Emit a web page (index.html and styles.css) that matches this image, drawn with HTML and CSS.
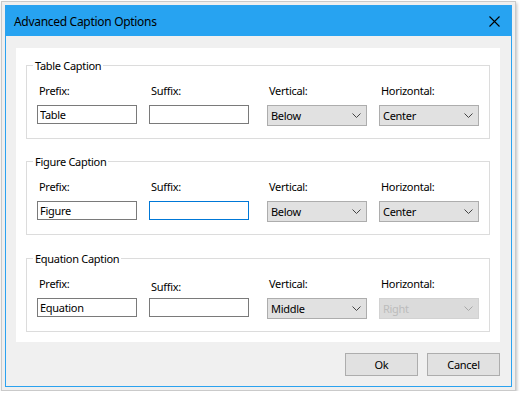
FILE: index.html
```html
<!DOCTYPE html>
<html lang="en">

<head>
    <meta charset="UTF-8">
    <meta name="viewport" content="width=device-width, initial-scale=1.0">
    <title>Advanced Caption Options</title>
    <link rel="stylesheet" href="styles.css">
</head>

<body>
    <div class="frame">
        <div class="window">
            <div class="titlebar">
                <span class="title">Advanced Caption Options</span>
                <svg class="close" width="11" height="11" viewBox="0 0 11 11">
                    <path d="M0.5 0.5 L10.5 10.5 M10.5 0.5 L0.5 10.5" stroke="#000" stroke-width="1.1" fill="none" />
                </svg>
            </div>
            <div class="body">
                <div class="panel">
                    <fieldset class="group">
                        <legend>Table Caption</legend>
                        <div class="row">
                            <div class="cell">
                                <label>Prefix:</label>
                                <input type="text" class="text" value="Table">
                            </div>
                            <div class="cell">
                                <label>Suffix:</label>
                                <input type="text" class="text" value="">
                            </div>
                            <div class="cell">
                                <label>Vertical:</label>
                                <span class="drop">
                                    <select>
                                        <option>Below</option>
                                    </select>
                                    <svg class="chev" width="9" height="5" viewBox="0 0 9 5"><path d="M0.5 0.5 L4.5 4.5 L8.5 0.5" /></svg>
                                </span>
                            </div>
                            <div class="cell">
                                <label>Horizontal:</label>
                                <span class="drop">
                                    <select>
                                        <option>Center</option>
                                    </select>
                                    <svg class="chev" width="9" height="5" viewBox="0 0 9 5"><path d="M0.5 0.5 L4.5 4.5 L8.5 0.5" /></svg>
                                </span>
                            </div>
                        </div>
                    </fieldset>

                    <fieldset class="group">
                        <legend>Figure Caption</legend>
                        <div class="row">
                            <div class="cell">
                                <label>Prefix:</label>
                                <input type="text" class="text" value="Figure">
                            </div>
                            <div class="cell">
                                <label>Suffix:</label>
                                <input type="text" class="text focus" value="">
                            </div>
                            <div class="cell">
                                <label>Vertical:</label>
                                <span class="drop">
                                    <select>
                                        <option>Below</option>
                                    </select>
                                    <svg class="chev" width="9" height="5" viewBox="0 0 9 5"><path d="M0.5 0.5 L4.5 4.5 L8.5 0.5" /></svg>
                                </span>
                            </div>
                            <div class="cell">
                                <label>Horizontal:</label>
                                <span class="drop">
                                    <select>
                                        <option>Center</option>
                                    </select>
                                    <svg class="chev" width="9" height="5" viewBox="0 0 9 5"><path d="M0.5 0.5 L4.5 4.5 L8.5 0.5" /></svg>
                                </span>
                            </div>
                        </div>
                    </fieldset>

                    <fieldset class="group last">
                        <legend>Equation Caption</legend>
                        <div class="row">
                            <div class="cell">
                                <label>Prefix:</label>
                                <input type="text" class="text" value="Equation">
                            </div>
                            <div class="cell">
                                <label class="low">Suffix:</label>
                                <input type="text" class="text" value="">
                            </div>
                            <div class="cell">
                                <label>Vertical:</label>
                                <span class="drop">
                                    <select>
                                        <option>Middle</option>
                                    </select>
                                    <svg class="chev" width="9" height="5" viewBox="0 0 9 5"><path d="M0.5 0.5 L4.5 4.5 L8.5 0.5" /></svg>
                                </span>
                            </div>
                            <div class="cell">
                                <label>Horizontal:</label>
                                <span class="drop off">
                                    <select disabled>
                                        <option>Right</option>
                                    </select>
                                    <svg class="chev" width="9" height="5" viewBox="0 0 9 5"><path d="M0.5 0.5 L4.5 4.5 L8.5 0.5" /></svg>
                                </span>
                            </div>
                        </div>
                    </fieldset>
                </div>
                <div class="buttons">
                    <button type="button" class="btn">Ok</button>
                    <button type="button" class="btn">Cancel</button>
                </div>
            </div>
        </div>
    </div>
</body>

</html>
```

FILE: styles.css
```css
* {
    margin: 0px;
    padding: 0px;
    box-sizing: border-box;
}

body {
    background: #ffffff;
    font-family: "Segoe UI", "Noto Sans", sans-serif;
    font-size: 11px;
    letter-spacing: -0.3px;
    color: #000000;
}

.frame {
    width: 515px;
    height: 390px;
    margin: 1px 0px 0px 1px;
    padding: 3px;
    border: 1px solid #cacaca;
    background: #efefef;
    box-shadow: 1px 2px 3px rgba(0, 0, 0, 0.25);
}

.window {
    width: 507px;
    height: 382px;
    border: 1px solid #2ba2ef;
    background: #f0f0f0;
}

.titlebar {
    height: 30px;
    background: #27a3f1;
    display: flex;
    align-items: center;
    justify-content: space-between;
    padding: 2px 11px 0px 8px;
}

.title {
    font-size: 12px;
    line-height: 16px;
}

.close {
    display: block;
    margin-top: -2px;
}

.body {
    height: 350px;
    padding: 12px 11px 10px 10px;
}

.panel {
    height: 294px;
    background: #ffffff;
    padding: 9px 10px 0px;
}

.group {
    border: 1px solid #dcdcdc;
    padding: 0px 0px 12px 10px;
    margin-bottom: 14px;
}

.group + .group.last {
    position: relative;
    top: 1px;
}

.group legend {
    margin-left: -4px;
    padding: 0px 2px;
    line-height: 16px;
    position: relative;
    top: 1px;
}

.row {
    display: grid;
    grid-template-columns: 112px 118px 112px 100px;
    padding-top: 9px;
}

.cell label {
    display: block;
    line-height: 16px;
    padding: 1px 0px 0px 2px;
    height: 17px;
    margin-bottom: 6px;
}

.cell label.low {
    margin-top: 3px;
    margin-bottom: 3px;
}

.text {
    display: block;
    width: 100px;
    height: 19px;
    border: 1px solid #7a7a7a;
    padding: 0px 2px;
    font: inherit;
    letter-spacing: inherit;
    outline: none;
    background: #ffffff;
}

.text.focus {
    border-color: #0078d7;
}

.drop {
    position: relative;
    display: block;
    width: 100px;
    height: 21px;
}

.drop select {
    appearance: none;
    -webkit-appearance: none;
    width: 100px;
    height: 21px;
    border: 1px solid #adadad;
    background: #e1e1e1;
    padding: 0px 3px;
    font: inherit;
    letter-spacing: inherit;
    color: #000000;
    outline: none;
}

.drop .chev {
    position: absolute;
    right: 6px;
    top: 8px;
    fill: none;
    stroke: #444444;
    stroke-width: 1;
}

.drop.off select {
    background: #cccccc;
    border-color: #bfbfbf;
    color: #a0a0a0;
}

.drop.off .chev {
    stroke: #a8a8a8;
}

.buttons {
    display: flex;
    justify-content: flex-end;
    gap: 9px;
    margin-top: 11px;
}

.btn {
    width: 73px;
    height: 23px;
    border: 1px solid #adadad;
    background: #e1e1e1;
    font: inherit;
    letter-spacing: inherit;
    color: #000000;
}
```
